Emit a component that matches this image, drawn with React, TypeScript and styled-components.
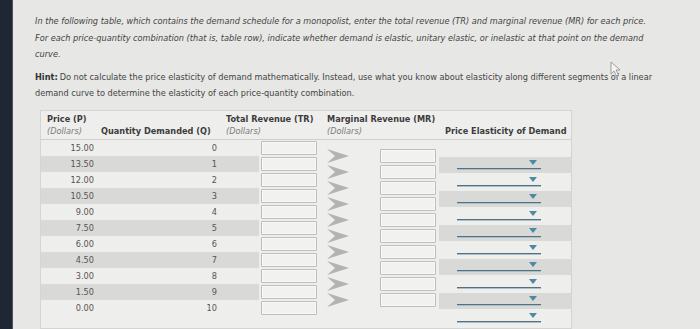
import styled, { createGlobalStyle } from "styled-components";

const PRICES = ["15.00", "13.50", "12.00", "10.50", "9.00", "7.50", "6.00", "4.50", "3.00", "1.50", "0.00"];

const GlobalStyle = createGlobalStyle`
  body {
    margin: 0;
    background: #e7e7e5;
    font-family: "DejaVu Sans", Verdana, sans-serif;
    color: #3a3a3a;
  }
`;

const Page = styled.div`
  display: flex;
  height: 329px;
  overflow: hidden;
  position: relative;
`;

const Strip = styled.div`
  width: 12px;
  flex-shrink: 0;
  background: #1f2733;
  border-right: 1px solid #4a5260;
`;

const Main = styled.div`
  flex: 1;
  padding: 13px 0 0 22px;
`;

const Intro = styled.p`
  margin: 0;
  font-size: 8.2px;
  line-height: 16.5px;
  font-style: italic;
  color: #444;
  width: 614px;
`;

const Hint = styled.p`
  margin: 6px 0 0;
  font-size: 8.2px;
  line-height: 16.5px;
  color: #444;
  width: 622px;
`;

const HintLabel = styled.strong`
  display: inline-block;
  margin-right: 2px;
  color: #333;
`;

const Table = styled.div`
  margin: 8px 0 0 5px;
  width: 530px;
  border: 1px solid #d4d4d2;
  background: #eeeeec;
  font-size: 8.2px;
`;

const HeaderRow = styled.div`
  display: grid;
  grid-template-columns: 58px 124px 98px 118px 132px;
  align-items: end;
  height: 27px;
  padding-top: 1px;
  border-bottom: 1px solid #cfcfcd;
`;

const HeadCell = styled.div<{ $pad: number }>`
  padding-left: ${({ $pad }) => $pad}px;
  line-height: 12px;
  padding-bottom: 2px;
  font-weight: bold;
  color: #3c3c3c;
  white-space: nowrap;
`;

const Unit = styled.div`
  font-weight: normal;
  font-style: italic;
  color: #7a7a7a;
`;

const Body = styled.div`
  display: flex;
  padding-bottom: 2px;
`;

const LeftRows = styled.div`
  width: 280px;
`;

const Row = styled.div`
  display: grid;
  grid-template-columns: 58px 124px 36px 62px;
  height: 16px;
  align-items: center;
`;

const NumCell = styled.div<{ $shade: boolean; $pad: number }>`
  height: 100%;
  display: flex;
  align-items: center;
  justify-content: flex-end;
  padding-right: ${({ $pad }) => $pad}px;
  background: ${({ $shade }) => ($shade ? "#d9d9d7" : "transparent")};
  color: #555;
`;

const Filler = styled.div<{ $shade: boolean }>`
  height: 100%;
  background: ${({ $shade }) => ($shade ? "#d9d9d7" : "transparent")};
`;

const InputCell = styled.div`
  padding-left: 2px;
  display: flex;
  align-items: center;
  height: 100%;
`;

const Box = styled.div`
  width: 56px;
  height: 14px;
  box-sizing: border-box;
  border: 1px solid #bdbdbb;
  border-radius: 1px;
  background: #f1f1ef;
  box-shadow: inset 0 0 0 1px #f8f8f6;
`;

const MRColumn = styled.div`
  width: 118px;
  padding-top: 8px;
`;

const MRRow = styled.div`
  height: 16px;
  display: flex;
  align-items: center;
  padding-left: 5px;
`;

const Chevron = styled.svg`
  width: 24px;
  height: 16px;
  flex-shrink: 0;
  margin-right: 30px;
`;

const ElastColumn = styled.div`
  width: 132px;
`;

const ElastRow = styled.div<{ $shade: boolean }>`
  height: 16px;
  background: ${({ $shade }) => ($shade ? "#d9d9d7" : "transparent")};
  padding-left: 18px;
  box-sizing: border-box;
`;

const Select = styled.div`
  position: relative;
  margin-top: 1px;
  width: 84px;
  height: 11px;
  border-bottom: 1px solid #56707e;
  box-shadow: 0 1px 0 #a9c0cc;
`;

const Caret = styled.div`
  position: absolute;
  right: 4px;
  top: 3px;
  width: 0;
  height: 0;
  border-left: 4px solid transparent;
  border-right: 4px solid transparent;
  border-top: 5px solid #4a8aa3;
`;

const Cursor = styled.svg`
  position: absolute;
  left: 610px;
  top: 61px;
  width: 12px;
  height: 16px;
`;

export default function App() {
  return (
    <>
      <GlobalStyle />
      <Page>
        <Strip />
        <Main>
          <Intro>
            In the following table, which contains the demand schedule for a monopolist, enter the total revenue (TR) and
            marginal revenue (MR) for each price. For each price&#8209;quantity combination (that is, table row), indicate whether
            demand is elastic, unitary elastic, or inelastic at that point on the demand curve.
          </Intro>
          <Hint>
            <HintLabel>Hint:</HintLabel>Do not calculate the price elasticity of demand mathematically. Instead, use what you know
            about elasticity along different segments of a linear demand curve to determine the elasticity of each
            price&#8209;quantity combination.
          </Hint>
          <Table>
            <HeaderRow>
              <HeadCell $pad={6}>
                Price (P)
                <Unit>(Dollars)</Unit>
              </HeadCell>
              <HeadCell $pad={2}>Quantity Demanded (Q)</HeadCell>
              <HeadCell $pad={3}>
                Total Revenue (TR)
                <Unit>(Dollars)</Unit>
              </HeadCell>
              <HeadCell $pad={6}>
                Marginal Revenue (MR)
                <Unit>(Dollars)</Unit>
              </HeadCell>
              <HeadCell $pad={6}>Price Elasticity of Demand</HeadCell>
            </HeaderRow>
            <Body>
              <LeftRows>
                {PRICES.map((p, i) => (
                  <Row key={p}>
                    <NumCell $shade={i % 2 === 1} $pad={5}>{p}</NumCell>
                    <NumCell $shade={i % 2 === 1} $pad={6}>{i}</NumCell>
                    <Filler $shade={i % 2 === 1} />
                    <InputCell>
                      <Box />
                    </InputCell>
                  </Row>
                ))}
              </LeftRows>
              <MRColumn>
                {PRICES.slice(1).map((p) => (
                  <MRRow key={p}>
                    <Chevron viewBox="0 0 24 16">
                      <polygon points="1,1 23,8 1,15 9,8" fill="#b3b3b1" />
                    </Chevron>
                    <Box />
                  </MRRow>
                ))}
              </MRColumn>
              <ElastColumn>
                {PRICES.map((p, i) => (
                  <ElastRow key={p} $shade={i % 2 === 1}>
                    {i > 0 && (
                      <Select>
                        <Caret />
                      </Select>
                    )}
                  </ElastRow>
                ))}
              </ElastColumn>
            </Body>
          </Table>
        </Main>
        <Cursor viewBox="0 0 12 16">
          <path d="M1 1 L1 13 L4 10 L6.5 15 L8.5 14 L6 9 L10 9 Z" fill="#f4f4f2" stroke="#8a8a8a" strokeWidth="0.8" />
        </Cursor>
      </Page>
    </>
  );
}
